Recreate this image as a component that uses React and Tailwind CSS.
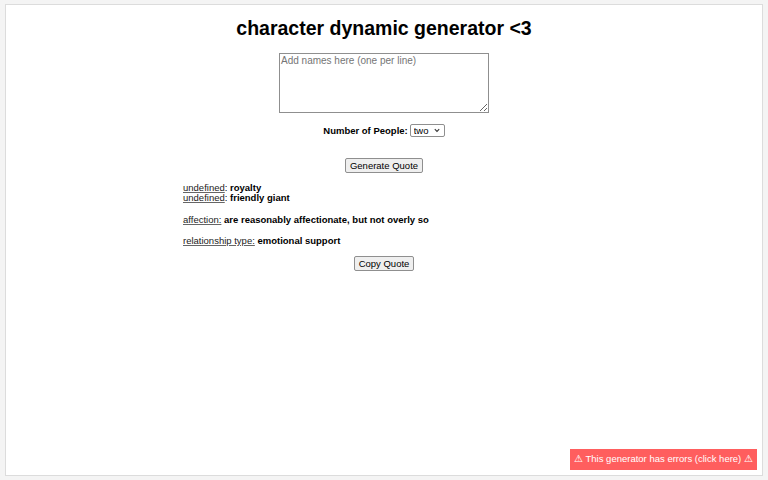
export default function App() {
  const font = { fontFamily: '"Liberation Sans", Arial, sans-serif' }
  return (
    <div className="h-[480px] w-[768px] bg-[#f4f4f4] pl-[5px] pr-[5px] pt-[4px] pb-[4px]" style={font}>
      <div className="relative flex h-[472px] flex-col items-center border border-[#dcdcdc] bg-white text-black">
        {/* Title */}
        <h1 className="mt-[11px] text-[19.5px] font-bold leading-[24px]">character dynamic generator &lt;3</h1>

        {/* Names input */}
        <textarea
          placeholder="Add names here (one per line)"
          className="mt-[13px] h-[60px] w-[210px] resize-y border border-[#8f8f8f] px-[1px] py-[1px] text-[10px] leading-[12px] placeholder:text-[#757575]"
        />

        {/* People count */}
        <div className="mt-[11px] flex items-center gap-[2px] text-[9.5px] font-bold">
          <span>Number of People:</span>
          <div className="relative">
            <select
              className="h-[13px] w-[35px] appearance-none rounded-[2px] border border-[#8f8f8f] bg-white pl-[3px] text-[9.5px] font-normal leading-[11px]"
              defaultValue="two"
            >
              <option>one</option>
              <option>two</option>
              <option>three</option>
            </select>
            <svg className="pointer-events-none absolute right-[5px] top-[4px]" width="6" height="5" viewBox="0 0 6 5">
              <path d="M0.8 1.2 L3 3.4 L5.2 1.2" fill="none" stroke="#333" strokeWidth="1.1" />
            </svg>
          </div>
        </div>

        <button className="mt-[20px] h-[15px] rounded-[2px] border border-[#8f8f8f] bg-[#efefef] px-[4px] text-[9.5px] leading-[13px]">
          Generate Quote
        </button>

        {/* Output */}
        <div className="mt-[10px] w-[402px] text-[9.5px] leading-[10px]">
          <div>
            <span className="text-[#222] underline decoration-[#666]">undefined</span>: <b>royalty</b>
          </div>
          <div>
            <span className="text-[#222] underline decoration-[#666]">undefined</span>: <b>friendly giant</b>
          </div>
          <div className="mt-[12px]">
            <span className="text-[#222] underline decoration-[#666]">affection:</span> <b>are reasonably affectionate, but not overly so</b>
          </div>
          <div className="mt-[11px]">
            <span className="text-[#222] underline decoration-[#666]">relationship type:</span> <b>emotional support</b>
          </div>
        </div>

        <button className="mt-[10px] h-[15px] rounded-[2px] border border-[#8f8f8f] bg-[#efefef] px-[4px] text-[9.5px] leading-[13px]">
          Copy Quote
        </button>

        {/* Error badge */}
        <div className="absolute bottom-[5px] right-[5px] flex h-[21px] w-[187px] items-center justify-center whitespace-nowrap bg-[#ff5e5e] text-[9.5px] text-white">
          ⚠ This generator has errors (click here) ⚠
        </div>
      </div>
    </div>
  )
}
